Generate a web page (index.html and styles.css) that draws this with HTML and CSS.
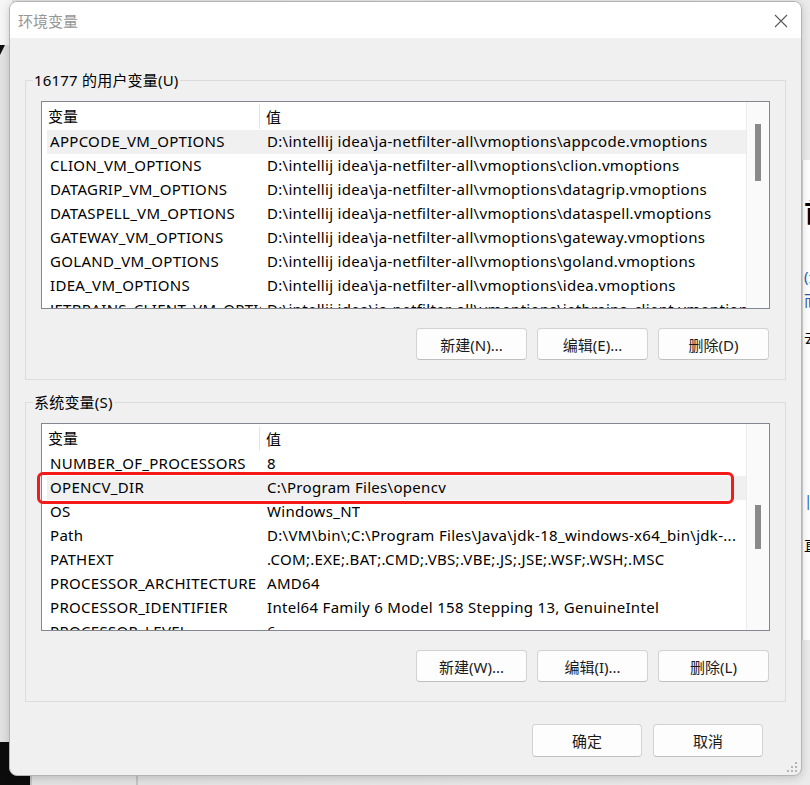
FILE: index.html
```html
<!DOCTYPE html>
<html lang="zh-CN">
<head>
    <meta charset="UTF-8">
    <title>环境变量</title>
    <link rel="stylesheet" href="styles.css">
</head>
<body>
    <div class="desktop">
        <div class="bg-topleft"></div>
        <div class="bg-corner"></div>
        <div class="bg-black"></div>
        <div class="bg-line one"></div>
        <div class="bg-line two"></div>
        <div class="bg-window">
            <div class="bw-line big">首</div>
            <div class="bw-line blue first">(无</div>
            <div class="bw-line blue">而(</div>
            <div class="bw-line gap">去</div>
            <div class="bw-line blue far">|</div>
            <div class="bw-line near">直</div>
        </div>

        <div class="dialog">
            <div class="titlebar">
                <span class="title">环境变量</span>
                <span class="close">
                    <svg width="14" height="14" viewBox="0 0 14 14"><path d="M1 1L13 13M13 1L1 13" stroke="#5a5a5a" stroke-width="1.1" fill="none"/></svg>
                </span>
            </div>

            <div class="dialog-body">
                <div class="group">
                    <div class="group-title">16177 的用户变量(U)</div>
                    <div class="listview">
                        <div class="list-main">
                            <div class="list-head">
                                <span class="col-name">变量</span>
                                <span class="col-value">值</span>
                            </div>
                            <div class="list-row selected"><span class="col-name">APPCODE_VM_OPTIONS</span><span class="col-value">D:\intellij idea\ja-netfilter-all\vmoptions\appcode.vmoptions</span></div>
                            <div class="list-row"><span class="col-name">CLION_VM_OPTIONS</span><span class="col-value">D:\intellij idea\ja-netfilter-all\vmoptions\clion.vmoptions</span></div>
                            <div class="list-row"><span class="col-name">DATAGRIP_VM_OPTIONS</span><span class="col-value">D:\intellij idea\ja-netfilter-all\vmoptions\datagrip.vmoptions</span></div>
                            <div class="list-row"><span class="col-name">DATASPELL_VM_OPTIONS</span><span class="col-value">D:\intellij idea\ja-netfilter-all\vmoptions\dataspell.vmoptions</span></div>
                            <div class="list-row"><span class="col-name">GATEWAY_VM_OPTIONS</span><span class="col-value">D:\intellij idea\ja-netfilter-all\vmoptions\gateway.vmoptions</span></div>
                            <div class="list-row"><span class="col-name">GOLAND_VM_OPTIONS</span><span class="col-value">D:\intellij idea\ja-netfilter-all\vmoptions\goland.vmoptions</span></div>
                            <div class="list-row"><span class="col-name">IDEA_VM_OPTIONS</span><span class="col-value">D:\intellij idea\ja-netfilter-all\vmoptions\idea.vmoptions</span></div>
                            <div class="list-row"><span class="col-name">JETBRAINS_CLIENT_VM_OPTIONS</span><span class="col-value">D:\intellij idea\ja-netfilter-all\vmoptions\jetbrains_client.vmoptions</span></div>
                        </div>
                        <div class="scrollbar"><div class="thumb user-thumb"></div></div>
                    </div>
                    <div class="btn-row">
                        <button class="btn">新建(N)...</button>
                        <button class="btn">编辑(E)...</button>
                        <button class="btn">删除(D)</button>
                    </div>
                </div>

                <div class="group system">
                    <div class="group-title">系统变量(S)</div>
                    <div class="listview">
                        <div class="list-main">
                            <div class="list-head">
                                <span class="col-name">变量</span>
                                <span class="col-value">值</span>
                            </div>
                            <div class="list-row"><span class="col-name">NUMBER_OF_PROCESSORS</span><span class="col-value">8</span></div>
                            <div class="list-row selected"><span class="col-name">OPENCV_DIR</span><span class="col-value">C:\Program Files\opencv</span></div>
                            <div class="list-row"><span class="col-name">OS</span><span class="col-value">Windows_NT</span></div>
                            <div class="list-row"><span class="col-name">Path</span><span class="col-value">D:\VM\bin\;C:\Program Files\Java\jdk-18_windows-x64_bin\jdk-...</span></div>
                            <div class="list-row"><span class="col-name">PATHEXT</span><span class="col-value">.COM;.EXE;.BAT;.CMD;.VBS;.VBE;.JS;.JSE;.WSF;.WSH;.MSC</span></div>
                            <div class="list-row"><span class="col-name">PROCESSOR_ARCHITECTURE</span><span class="col-value">AMD64</span></div>
                            <div class="list-row"><span class="col-name">PROCESSOR_IDENTIFIER</span><span class="col-value">Intel64 Family 6 Model 158 Stepping 13, GenuineIntel</span></div>
                            <div class="list-row"><span class="col-name">PROCESSOR_LEVEL</span><span class="col-value">6</span></div>
                        </div>
                        <div class="scrollbar"><div class="thumb system-thumb"></div></div>
                    </div>
                    <div class="highlight-box"></div>
                    <div class="btn-row">
                        <button class="btn">新建(W)...</button>
                        <button class="btn">编辑(I)...</button>
                        <button class="btn">删除(L)</button>
                    </div>
                </div>

                <div class="dialog-footer">
                    <button class="btn">确定</button>
                    <button class="btn">取消</button>
                </div>
            </div>

            <svg class="grip" width="11" height="11" viewBox="0 0 11 11">
                <rect x="8" y="0" width="2" height="2" fill="#b5b5b5"/>
                <rect x="4" y="4" width="2" height="2" fill="#b5b5b5"/>
                <rect x="8" y="4" width="2" height="2" fill="#b5b5b5"/>
                <rect x="0" y="8" width="2" height="2" fill="#b5b5b5"/>
                <rect x="4" y="8" width="2" height="2" fill="#b5b5b5"/>
                <rect x="8" y="8" width="2" height="2" fill="#b5b5b5"/>
            </svg>
        </div>
    </div>
</body>
</html>
```

FILE: styles.css
```css
* {
    box-sizing: border-box;
    margin: 0;
    padding: 0;
}

body {
    font-family: "Noto Sans", "Noto Sans CJK SC", sans-serif;
    font-size: 15px;
    color: #000;
    background: #e4e4e4;
    overflow: hidden;
}

.desktop {
    position: relative;
    width: 810px;
    height: 785px;
    overflow: hidden;
    background: linear-gradient(90deg, #e2e2e2, #ebebeb);
}

/* stuff behind the dialog */
.bg-topleft {
    position: absolute;
    left: 0;
    top: 0;
    width: 12px;
    height: 45px;
    background: #f6f6f6;
}

.bg-corner {
    position: absolute;
    left: 0;
    top: 45px;
    width: 0;
    height: 0;
    border-top: 10px solid #111;
    border-right: 5px solid transparent;
}

.bg-black {
    position: absolute;
    left: 0;
    top: 742px;
    width: 30px;
    height: 43px;
    background: #0c0c0c;
}

.bg-line {
    position: absolute;
    top: 770px;
    width: 2px;
    height: 15px;
    background: #c4c4c4;
}

.bg-line.one { left: 30px; }
.bg-line.two { left: 136px; }

.bg-window {
    position: absolute;
    left: 801px;
    top: 160px;
    width: 40px;
    height: 480px;
    background: #fff;
    border-left: 2px solid #d6d6d6;
    overflow: hidden;
    padding-left: 1px;
}

.bw-line {
    font-size: 15px;
    line-height: 20px;
    white-space: nowrap;
    margin-top: 4px;
}

.bw-line.big {
    font-size: 26px;
    line-height: 30px;
    font-weight: 700;
    margin-top: 37px;
}

.bw-line.blue { color: #2a5fb0; }
.bw-line.first { margin-top: 39px; }
.bw-line.gap { margin-top: 17px; }
.bw-line.far { margin-top: 143px; }
.bw-line.near { margin-top: 25px; }

/* dialog window */
.dialog {
    position: absolute;
    left: 9px;
    top: 1px;
    width: 793px;
    height: 775px;
    border: 1px solid #b4b4b4;
    border-radius: 8px;
    background: #f0f0f0;
    overflow: hidden;
    box-shadow: 0 2px 10px rgba(0, 0, 0, 0.18);
}

.titlebar {
    height: 36px;
    background: #fff;
    display: flex;
    align-items: center;
    justify-content: space-between;
    padding-left: 8px;
    padding-right: 13px;
}

.title {
    color: #969696;
    font-size: 15px;
}

.close {
    display: flex;
    align-items: center;
    margin-top: 1px;
}

.dialog-body {
    display: flex;
    flex-direction: column;
}

.group {
    position: relative;
    margin: 42px 15px 0;
    border: 1px solid #dcdcdc;
    padding: 20px 15px 19px;
}

.group.system {
    margin-top: 22px;
}

.group-title {
    position: absolute;
    top: -11px;
    left: 7px;
    padding: 0 1px;
    line-height: 20px;
    letter-spacing: 0.2px;
    background: #f0f0f0;
}

.listview {
    display: flex;
    height: 208px;
    border: 1px solid #828790;
    background: #fff;
    overflow: hidden;
}

.list-main {
    width: 704px;
    overflow: hidden;
}

.list-head {
    display: flex;
    height: 28px;
    align-items: center;
}

.list-head .col-name {
    width: 218px;
    padding-left: 6px;
    border-right: 1px solid #e5e5e5;
    line-height: 25px;
}

.list-head .col-value {
    padding-left: 6px;
}

.list-row {
    display: flex;
    height: 24px;
    line-height: 22px;
    margin-left: 5px;
    white-space: nowrap;
    letter-spacing: 0.3px;
}

.list-row.selected {
    background: #f0f0f0;
}

.list-row .col-name {
    width: 214px;
    flex-shrink: 0;
    padding-left: 3px;
    overflow: hidden;
}

.list-row .col-value {
    padding-left: 6px;
    overflow: hidden;
}

.scrollbar {
    width: 23px;
    background: #fafafa;
    border-left: 1px solid #ececec;
    padding-left: 8px;
}

.thumb {
    width: 6px;
    background: #8a8a8a;
}

.user-thumb {
    margin-top: 22px;
    height: 57px;
}

.system-thumb {
    margin-top: 81px;
    height: 44px;
}

.highlight-box {
    position: absolute;
    left: 11px;
    top: 69px;
    width: 697px;
    height: 32px;
    border: 3px solid #f51a1a;
    border-radius: 6px;
}

.btn-row {
    display: flex;
    justify-content: flex-end;
    gap: 10px;
    margin-top: 19px;
    padding-right: 1px;
}

.btn {
    width: 111px;
    height: 32px;
    font-family: "Noto Sans", "Noto Sans CJK SC", sans-serif;
    font-size: 15px;
    color: #1a1a1a;
    background: #fdfdfd;
    border: 1px solid #d2d2d2;
    border-bottom-color: #c0c0c0;
    border-radius: 4px;
}

.dialog-footer {
    display: flex;
    justify-content: flex-end;
    gap: 11px;
    margin: 22px 38px 0 0;
}

.dialog-footer .btn {
    width: 110px;
    height: 33px;
}

.grip {
    position: absolute;
    right: 3px;
    bottom: 2px;
}
```
